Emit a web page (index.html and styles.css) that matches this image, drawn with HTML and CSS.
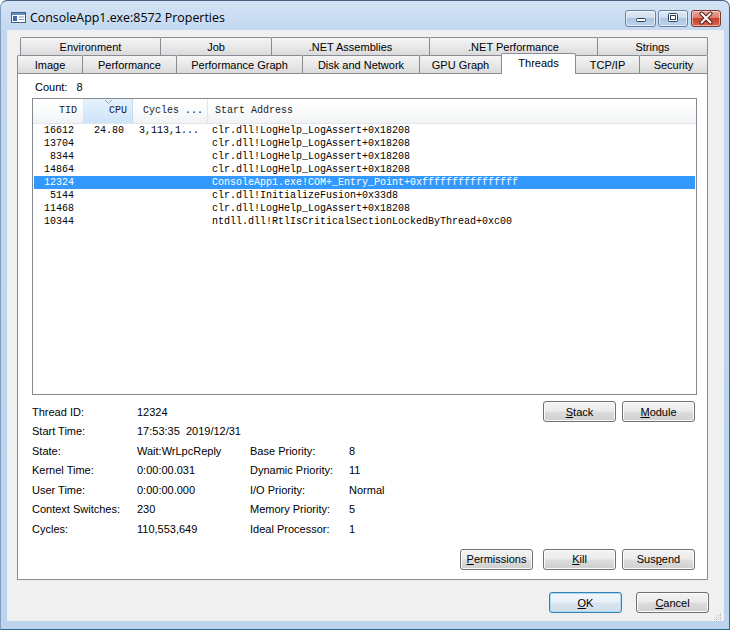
FILE: index.html
```html
<!DOCTYPE html>
<html>
<head>
<meta charset="utf-8">
<link rel="stylesheet" href="styles.css">
</head>
<body>
<div class="window">
  <div class="titlebar">
    <svg class="appicon" width="15" height="11" viewBox="0 0 15 11">
      <rect x="0.5" y="0.5" width="14" height="10" fill="#ffffff" stroke="#3f5f86"/>
      <rect x="1" y="1" width="13" height="2" fill="#5f8fc7"/>
      <rect x="2" y="4" width="4" height="5" fill="#3a6db0"/>
      <rect x="8" y="4.5" width="5" height="1" fill="#7a9cc4"/>
      <rect x="8" y="7" width="5" height="1" fill="#7a9cc4"/>
    </svg>
    <div class="title">ConsoleApp1.exe:8572 Properties</div>
    <div class="caption">
      <div class="cbtn cmin">
        <svg width="31" height="17" viewBox="0 0 31 17"><rect x="11.5" y="8.5" width="9" height="3" rx="1" fill="#ffffff" stroke="#2c3e57"/></svg>
      </div>
      <div class="cbtn cmax">
        <svg width="30" height="17" viewBox="0 0 30 17"><rect x="10.5" y="3.5" width="9" height="8" rx="1" fill="#ffffff" stroke="#2c3e57"/><rect x="12.5" y="5.5" width="5" height="4" fill="none" stroke="#2c3e57"/></svg>
      </div>
      <div class="cbtn cclose">
        <svg width="30" height="17" viewBox="0 0 30 17"><path d="M10.5 3.5 L19.5 12.5 M19.5 3.5 L10.5 12.5" stroke="#5a1e16" stroke-width="4" stroke-linecap="round"/><path d="M10.5 3.5 L19.5 12.5 M19.5 3.5 L10.5 12.5" stroke="#ffffff" stroke-width="2" stroke-linecap="round"/></svg>
      </div>
    </div>
  </div>
  <div class="client">
    <div class="tabctl">
      <div class="tabrow r1">
        <div class="tab w-env">Environment</div>
        <div class="tab w-job">Job</div>
        <div class="tab w-asm">.NET Assemblies</div>
        <div class="tab w-nperf">.NET Performance</div>
        <div class="tab w-str">Strings</div>
      </div>
      <div class="tabrow r2">
        <div class="tab w-img">Image</div>
        <div class="tab w-perf">Performance</div>
        <div class="tab w-pg">Performance Graph</div>
        <div class="tab w-dn">Disk and Network</div>
        <div class="tab w-gpu">GPU Graph</div>
        <div class="tab sel w-thr">Threads</div>
        <div class="tab w-tcp">TCP/IP</div>
        <div class="tab w-sec">Security</div>
      </div>
      <div class="panel">
        <div class="count"><span>Count:</span><span class="countval">8</span></div>
        <div class="list">
          <div class="lhead">
            <div class="hc c1">TID</div>
            <div class="hc c2 sorted">CPU<svg class="sortarrow" width="7" height="4" viewBox="0 0 7 4"><path d="M0 0 L3.5 3.5 L7 0" fill="none" stroke="#97a5b8" stroke-width="1"/></svg></div>
            <div class="hc c3">Cycles ...</div>
            <div class="hc c4">Start Address</div>
          </div>
          <div class="lrow"><span class="d1">16612</span><span class="d2">24.80</span><span class="d3">3,113,1...</span><span class="d4">clr.dll!LogHelp_LogAssert+0x18208</span></div>
          <div class="lrow"><span class="d1">13704</span><span class="d2"></span><span class="d3"></span><span class="d4">clr.dll!LogHelp_LogAssert+0x18208</span></div>
          <div class="lrow"><span class="d1">8344</span><span class="d2"></span><span class="d3"></span><span class="d4">clr.dll!LogHelp_LogAssert+0x18208</span></div>
          <div class="lrow"><span class="d1">14864</span><span class="d2"></span><span class="d3"></span><span class="d4">clr.dll!LogHelp_LogAssert+0x18208</span></div>
          <div class="lrow selrow"><span class="d1">12324</span><span class="d2"></span><span class="d3"></span><span class="d4">ConsoleApp1.exe!COM+_Entry_Point+0xffffffffffffffff</span></div>
          <div class="lrow"><span class="d1">5144</span><span class="d2"></span><span class="d3"></span><span class="d4">clr.dll!InitializeFusion+0x33d8</span></div>
          <div class="lrow"><span class="d1">11468</span><span class="d2"></span><span class="d3"></span><span class="d4">clr.dll!LogHelp_LogAssert+0x18208</span></div>
          <div class="lrow"><span class="d1">10344</span><span class="d2"></span><span class="d3"></span><span class="d4">ntdll.dll!RtlIsCriticalSectionLockedByThread+0xc00</span></div>
        </div>
        <div class="details">
          <div class="info">
            <div>Thread ID:</div><div>12324</div><div></div><div></div>
            <div>Start Time:</div><div class="pre">17:53:35  2019/12/31</div><div></div><div></div>
            <div>State:</div><div>Wait:WrLpcReply</div><div>Base Priority:</div><div>8</div>
            <div>Kernel Time:</div><div>0:00:00.031</div><div>Dynamic Priority:</div><div>11</div>
            <div>User Time:</div><div>0:00:00.000</div><div>I/O Priority:</div><div>Normal</div>
            <div>Context Switches:</div><div>230</div><div>Memory Priority:</div><div>5</div>
            <div>Cycles:</div><div>110,553,649</div><div>Ideal Processor:</div><div>1</div>
          </div>
          <div class="topbtns">
            <div class="btn"><u>S</u>tack</div>
            <div class="btn"><u>M</u>odule</div>
          </div>
        </div>
        <div class="botbtns">
          <div class="btn"><u>P</u>ermissions</div>
          <div class="btn gap10"><u>K</u>ill</div>
          <div class="btn">Sus<u>p</u>end</div>
        </div>
      </div>
    </div>
    <div class="dlgbtns">
      <div class="btn def"><u>O</u>K</div>
      <div class="btn"><u>C</u>ancel</div>
    </div>
    <svg class="grip" width="8" height="8" viewBox="0 0 8 8">
      <rect x="6" y="0" width="1" height="1" fill="#b5b5b5"/>
      <rect x="4" y="2" width="1" height="1" fill="#b5b5b5"/>
      <rect x="6" y="2" width="1" height="1" fill="#b5b5b5"/>
      <rect x="2" y="4" width="1" height="1" fill="#b5b5b5"/>
      <rect x="4" y="4" width="1" height="1" fill="#b5b5b5"/>
      <rect x="6" y="4" width="1" height="1" fill="#b5b5b5"/>
      <rect x="0" y="6" width="1" height="1" fill="#b5b5b5"/>
      <rect x="2" y="6" width="1" height="1" fill="#b5b5b5"/>
      <rect x="4" y="6" width="1" height="1" fill="#b5b5b5"/>
      <rect x="6" y="6" width="1" height="1" fill="#b5b5b5"/>
    </svg>
  </div>
</div>
</body>
</html>
```

FILE: styles.css
```css
* { box-sizing: border-box; }
html, body { margin: 0; padding: 0; background: #ffffff; }
body {
  font-family: "Liberation Sans", Arial, sans-serif;
  font-size: 11px;
  color: #000;
}
.window {
  width: 730px;
  height: 630px;
  border: 1px solid #4a6180;
  border-left-color: #7f9dc0;
  border-bottom-color: #2f6a84;
  border-radius: 7px 7px 0 0;
  background: linear-gradient(to bottom, #d3e3f5 0px, #c3d8f0 30px, #bcd3ed 100%);
  padding: 0 5px 8px 7px;
  display: flex;
  flex-direction: column;
}
.titlebar {
  height: 29px;
  flex: none;
  display: flex;
  align-items: center;
  padding: 4px 0 0 3px;
}
.appicon { flex: none; margin-right: 4px; }
.title {
  font-family: "Open Sans", "Liberation Sans", sans-serif;
  font-size: 12.4px;
  color: #000;
  white-space: nowrap;
}
.caption {
  align-self: flex-start;
  margin: 5px 3px 0 auto;
  display: flex;
}
.cbtn {
  height: 17px;
  border: 1px solid #6a80a0;
  border-radius: 3px;
  overflow: hidden;
  position: relative;
  box-shadow: inset 0 0 0 1px rgba(255,255,255,0.5);
  background: linear-gradient(to bottom, #e3ecf7 0%, #cddced 45%, #adc5e2 50%, #bed4ec 100%);
}
.cbtn svg { position: absolute; left: -1px; top: -1px; }
.cmin { width: 31px; }
.cmax { width: 30px; margin-left: 2px; }
.cclose {
  width: 30px;
  margin-left: 3px;
  border-color: #7a3a30;
  background: linear-gradient(to bottom, #e9a89a 0%, #db7d6c 45%, #c7412b 50%, #d6664e 100%);
}
.client {
  flex: 1;
  background: #f0f0f0;
  position: relative;
  display: flex;
  flex-direction: column;
  box-shadow: -1px 0 0 #e6eef8;
}
.tabctl {
  margin: 7px 0 0 9px;
  width: 691px;
}
.tabrow { display: flex; height: 18px; align-items: flex-start; }
.r1 { margin-left: 3px; }
.tab {
  height: 18px;
  flex: none;
  border: 1px solid #898c95;
  border-bottom: none;
  border-radius: 2px 2px 0 0;
  background: linear-gradient(to bottom, #f5f5f5, #e6e6e6 60%, #dadada);
  display: flex;
  align-items: center;
  justify-content: center;
  margin-left: -1px;
  white-space: nowrap;
  padding-top: 1px;
}
.tab:first-child { margin-left: 0; }
.tab.sel {
  background: #ffffff;
  height: 21px;
  margin-top: -2px;
  position: relative;
  z-index: 2;
  align-items: flex-start;
  padding-top: 3px;
}
.w-env { width: 141px; }
.w-job { width: 112px; }
.w-asm { width: 159px; }
.w-nperf { width: 169px; }
.w-str { width: 111px; }
.w-img { width: 66px; }
.w-perf { width: 95px; }
.w-pg { width: 127px; }
.w-dn { width: 118px; }
.w-gpu { width: 83px; }
.w-thr { width: 75px; }
.w-tcp { width: 65px; }
.w-sec { width: 69px; }

.panel {
  height: 507px;
  border: 1px solid #898c95;
  background: #ffffff;
  padding: 6px 10px 0 14px;
  display: flex;
  flex-direction: column;
}
.count {
  height: 14px;
  line-height: 14px;
  margin: 0 0 4px 3px;
  display: flex;
}
.countval { margin-left: 9px; }
.list {
  height: 297px;
  flex: none;
  border: 1px solid #828790;
  background: #ffffff;
  font-family: "Liberation Mono", "DejaVu Sans Mono", monospace;
  font-size: 10px;
}
.lhead {
  height: 25px;
  display: flex;
  border-bottom: 1px solid #e2e5ea;
  background: linear-gradient(to bottom, #ffffff 0%, #fbfcfc 45%, #f1f2f4 100%);
  color: #1b1b1b;
}
.hc {
  height: 24px;
  line-height: 24px;
  border-right: 1px solid #e3e6ea;
  white-space: nowrap;
}
.c1 { width: 51px; text-align: right; padding-right: 6px; }
.c2 { width: 49px; text-align: right; padding-right: 5px; position: relative; }
.c3 { width: 75px; padding-left: 10px; }
.c4 { flex: 1; padding-left: 7px; border-right: none; }
.sorted {
  background: linear-gradient(to bottom, #e6f2fc 0%, #dbecfb 45%, #cde4f8 100%);
  border-right-color: #c5dbef;
}
.sortarrow { position: absolute; left: 21px; top: 1px; }
.lrow {
  height: 13px;
  line-height: 13px;
  margin: 0 1px;
  display: flex;
  white-space: pre;
  color: #000;
}
.selrow { background: #3399ff; color: #ffffff; }
.d1 { width: 50px; text-align: right; padding-right: 10px; }
.d2 { width: 49px; text-align: right; padding-right: 9px; }
.d3 { width: 75px; padding-left: 6px; }
.d4 { flex: 1; padding-left: 4px; }

.details {
  margin-top: 7px;
  display: flex;
  align-items: flex-start;
}
.info {
  flex: 1;
  display: grid;
  grid-template-columns: 105px 113px 99px auto;
  grid-template-rows: repeat(7, 19.5px);
  align-items: center;
  white-space: nowrap;
}
.pre { white-space: pre; }
.topbtns {
  display: flex;
  gap: 6px;
  margin: -1px 2px 0 0;
}
.btn {
  width: 73px;
  height: 21px;
  flex: none;
  border: 1px solid #707070;
  border-radius: 3px;
  background: linear-gradient(to bottom, #f3f3f3 0%, #ebebeb 48%, #dddddd 52%, #cfcfcf 100%);
  box-shadow: inset 0 0 0 1px #fbfbfb;
  display: flex;
  align-items: center;
  justify-content: center;
  white-space: nowrap;
}
.btn u { text-decoration: underline; text-underline-offset: 1px; }
.botbtns {
  margin: 10px 2px 0 0;
  display: flex;
  justify-content: flex-end;
  gap: 6px;
}
.botbtns .gap10 { margin-left: 4px; }
.dlgbtns {
  margin: 12px 15px 0 0;
  display: flex;
  justify-content: flex-end;
  gap: 14px;
}
.btn.def {
  border-color: #3c7fb1;
  box-shadow: inset 0 0 0 1px #a6dcf7;
  background: linear-gradient(to bottom, #f2f7fb 0%, #e9f1f8 48%, #dbe5ef 52%, #d0dde9 100%);
}
.grip { position: absolute; right: 2px; bottom: 0; }
```
